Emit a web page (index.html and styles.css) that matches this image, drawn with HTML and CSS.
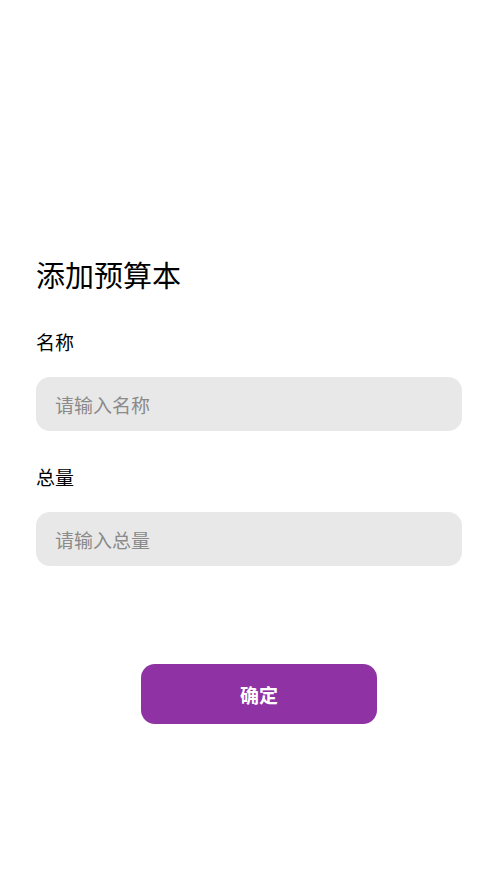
FILE: index.html
```html
<!DOCTYPE html>
<html lang="zh-CN">
<head>
<meta charset="utf-8">
<title>添加预算本</title>
<link rel="stylesheet" href="styles.css">
</head>
<body>
<main class="page">
  <h1 class="title">添加预算本</h1>
  <label class="label label-first" for="name">名称</label>
  <input class="field" id="name" type="text" placeholder="请输入名称">
  <label class="label" for="total">总量</label>
  <input class="field" id="total" type="text" placeholder="请输入总量">
  <div class="actions">
    <button class="confirm" type="button">确定</button>
  </div>
</main>
</body>
</html>
```

FILE: styles.css
```css
html, body {
  margin: 0;
  padding: 0;
  background: #ffffff;
}

body {
  font-family: "Noto Sans CJK SC", "Noto Sans", sans-serif;
  color: #000;
}

.page {
  display: flex;
  flex-direction: column;
  padding: 254px 35px 0 36px;
}

.title {
  margin: 0;
  font-size: 29px;
  line-height: 40px;
  font-weight: 400;
  color: #000;
}

.label {
  display: block;
  margin-top: 33px;
  margin-bottom: 21px;
  font-size: 19px;
  line-height: 26px;
  color: #000;
}

.label-first {
  margin-top: 35px;
}

.field {
  box-sizing: border-box;
  width: 100%;
  height: 54px;
  margin: 0;
  padding: 0 19px;
  border: none;
  border-radius: 14px;
  background: #e8e8e8;
  font-family: inherit;
  font-size: 19px;
  color: #000;
  outline: none;
}

.field::placeholder {
  color: #8a8a8a;
}

.label + .field {
  margin-top: 1px;
}

.actions {
  display: flex;
  margin-top: 98px;
  padding-left: 105px;
}

.confirm {
  width: 236px;
  height: 60px;
  border: none;
  border-radius: 14px;
  background: #8f32a4;
  color: #fff;
  font-family: inherit;
  font-size: 19px;
  font-weight: 700;
  cursor: pointer;
}
```
